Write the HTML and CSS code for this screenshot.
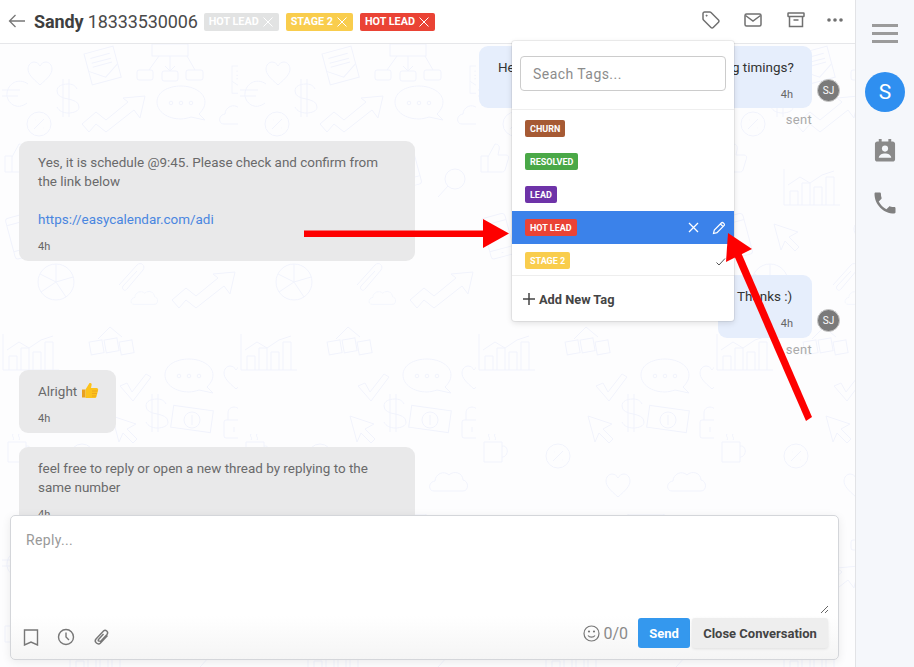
FILE: index.html
```html
<!DOCTYPE html>
<html lang="en">
<head>
<meta charset="utf-8">
<title>Conversation</title>
<link rel="stylesheet" href="styles.css">
</head>
<body>
<div class="app">
  <main class="main">
    <header class="topbar">
      <svg class="back" width="18" height="14" viewBox="0 0 18 14"><path d="M17 7H1.500M7.500 1L1.500 7l6 6" fill="none" stroke="#777" stroke-width="1.300"/></svg>
      <h1 class="title"><b>Sandy</b> 18333530006</h1>
      <div class="head-tags">
        <span class="tag tag-grey">HOT LEAD <svg class="tag-x" width="10" height="10" viewBox="0 0 10 10"><path d="M.5.5l9 9M9.500.5l-9 9"/></svg></span>
        <span class="tag tag-yellow">STAGE 2 <svg class="tag-x" width="10" height="10" viewBox="0 0 10 10"><path d="M.5.5l9 9M9.500.5l-9 9"/></svg></span>
        <span class="tag tag-red">HOT LEAD <svg class="tag-x" width="10" height="10" viewBox="0 0 10 10"><path d="M.5.5l9 9M9.500.5l-9 9"/></svg></span>
      </div>
      <div class="head-actions">
        <svg class="ha-tag" width="20" height="20" viewBox="0 0 20 20" fill="none" stroke="#707070" stroke-width="1.500"><path d="M2 3.600c0-.9.7-1.600 1.600-1.600h5.200c.5 0 .9.2 1.200.5l7.500 7.500c.6.600.6 1.600 0 2.200l-5.300 5.300c-.6.600-1.600.6-2.200 0L2.500 10c-.3-.3-.5-.7-.5-1.200z"/><circle cx="5.600" cy="5.600" r=".7" fill="#707070" stroke-width=".6"/></svg>
        <svg class="ha-mail" width="18" height="16" viewBox="0 0 18 16" fill="none" stroke="#707070" stroke-width="1.500"><rect x="1" y="2" width="16" height="12" rx="1.500"/><path d="M1.500 3.500L9 9l7.500-5.500"/></svg>
        <svg class="ha-box" width="18" height="16" viewBox="0 0 18 16" fill="none" stroke="#707070" stroke-width="1.500"><rect x="1" y="1" width="16" height="3.500" rx=".5"/><path d="M2.500 4.500v10h13v-10M6.500 8h5"/></svg>
        <svg class="ha-more" width="18" height="6" viewBox="0 0 18 6" fill="#707070"><circle cx="3" cy="3" r="1.800"/><circle cx="9" cy="3" r="1.800"/><circle cx="15" cy="3" r="1.800"/></svg>
      </div>
    </header>

    <section class="chat">
      <svg class="doodles" width="100%" height="100%" aria-hidden="true">
        <defs>
          <g id="d-heart"><path d="M12 23C4 16 0 12 0 7c0-4 3-7 6-7 3 0 5 2 6 4 1-2 3-4 6-4 3 0 6 3 6 7 0 5-4 9-12 16z"/></g>
          <g id="d-env"><rect x="0" y="0" width="30" height="32"/><path d="M0 18l15 10 15-10M5 6h20M5 11h20M5 15h20"/></g>
          <g id="d-flow"><rect x="15" y="0" width="36" height="12"/><path d="M33 12v14M28 22l5 5 5-5M22 12l-10 14M50 12l8 14"/><rect x="0" y="26" width="16" height="10" rx="2"/><rect x="25" y="27" width="16" height="10" rx="2"/><rect x="49" y="26" width="17" height="10" rx="2"/></g>
          <g id="d-dollar"><path d="M8 0v38M14 0v38M22 10c-2-4-5-5-9-5-6 0-11 2-11 7 0 11 22 5 22 16 0 4-5 6-11 6-5 0-9-2-11-6"/></g>
          <g id="d-euro"><path d="M26 4C16-3 6 4 5 13c-1 10 10 18 20 10M0 10h18M0 16h16"/></g>
          <g id="d-trend"><path d="M0 28l14-12 10 8L46 6l-5-4 22-2-5 22-6-8-28 22-10-8L7 36z"/></g>
          <g id="d-bubble"><path d="M24 0c13 0 24 7 24 16 0 5-3 9-6 12l6 6-14-3c-3 1-7 2-10 2C11 33 0 26 0 16S11 0 24 0z"/><circle cx="14" cy="17" r="1.800"/><circle cx="24" cy="17" r="1.800"/><circle cx="34" cy="17" r="1.800"/></g>
          <g id="d-cloud"><path d="M6 22C0 22 0 13 7 12c0-7 9-11 14-6 5-5 14-2 14 5 6 1 6 11 0 11z"/></g>
          <g id="d-pct"><circle cx="12" cy="12" r="12"/><path d="M7 17l10-10M8 8h.5M16 16h.5"/></g>
          <g id="d-pie"><circle cx="18" cy="18" r="18"/><path d="M18 18L18 0M18 18l17-5M18 18l10 15M18 18L3 28M18 18L2 10"/></g>
          <g id="d-clip"><path d="M4 26L22 6c4-4 9 1 6 5L12 30c-2 3-6 0-4-3L22 12"/></g>
          <g id="d-check"><path d="M0 12l7-3 5 9L26 0l5 3-18 24z"/></g>
          <g id="d-money"><rect x="0" y="4" width="40" height="22" transform="rotate(8 20 15)"/><circle cx="20" cy="16" r="8"/><path d="M20 11v10"/></g>
          <g id="d-lock"><rect x="0" y="14" width="20" height="18" rx="2"/><path d="M4 14V7c0-8 12-8 12 0v7M10 21v5"/></g>
          <g id="d-mug"><path d="M0 8h18v20H0zM18 12c7-1 7 11 0 11M5 0c-2 3 2 3 0 6M11 0c-2 3 2 3 0 6"/></g>
          <g id="d-cursor"><path d="M0 0l24 8-9 5 10 10-4 4-10-10-4 9z"/></g>
          <g id="d-thumb"><path d="M0 12h7v16H0zM7 13l7-13c4 0 5 3 4 6l-1 5h8c3 0 3 3 2 5l-3 10c-1 2-2 2-4 2H7"/></g>
          <g id="d-phone"><rect x="0" y="0" width="24" height="42" rx="3"/><path d="M0 7h24M0 34h24M11 38h2"/></g>
          <g id="d-bars"><path d="M0 0v36h56M6 36V22h8v14M18 36V14h8v22M30 36V18h8v18M42 36V8h8v28M4 16l12-8 10 6 12-8 12-4"/></g>
          <g id="d-search"><circle cx="17" cy="10" r="10"/><path d="M10 17L0 28"/></g>
          <g id="d-flow2"><rect x="0" y="2" width="13" height="13" transform="rotate(-10 6 8)"/><rect x="15" y="0" width="13" height="13" transform="rotate(-10 21 6)"/><rect x="30" y="2" width="13" height="13" transform="rotate(-10 36 8)"/><path d="M8 0L20 -12l12 10"/></g>
          <pattern id="doodle-tile" x="0" y="0" width="238" height="470" patternUnits="userSpaceOnUse">
            <g fill="none" stroke="#f1f3fc" stroke-width="1">
              <use href="#d-env" transform="translate(84 10) rotate(-15)"/>
              <use href="#d-flow" transform="translate(137 0)"/>
              <use href="#d-heart" transform="translate(28 18)"/>
              <use href="#d-dollar" transform="translate(55 35)"/>
              <use href="#d-euro" transform="translate(2 36)"/>
              <use href="#d-trend" transform="translate(82 52)"/>
              <use href="#d-bubble" transform="translate(157 42)"/>
              <use href="#d-env" transform="translate(232 22) scale(.85)"/>
              <use href="#d-cloud" transform="translate(218 58)"/>
              <use href="#d-pct" transform="translate(27 68)"/>
              <use href="#d-thumb" transform="translate(5 100)"/>
              <use href="#d-phone" transform="translate(150 105) rotate(-15)"/>
              <use href="#d-bars" transform="translate(70 125)"/>
              <use href="#d-phone" transform="translate(5 175) rotate(-15)"/>
              <use href="#d-search" transform="translate(200 125)"/>
              <use href="#d-cursor" transform="translate(60 180)"/>
              <use href="#d-heart" transform="translate(140 178)"/>
              <use href="#d-pie" transform="translate(38 220)"/>
              <use href="#d-clip" transform="translate(115 215)"/>
              <use href="#d-trend" transform="translate(172 228)"/>
              <use href="#d-cloud" transform="translate(130 245) scale(.7)"/>
              <use href="#d-flow2" transform="translate(90 295)"/>
              <use href="#d-bars" transform="translate(3 290)"/>
              <use href="#d-bubble" transform="translate(165 315)"/>
              <use href="#d-heart" transform="translate(224 322)"/>
              <use href="#d-check" transform="translate(120 330)"/>
              <use href="#d-dollar" transform="translate(144 350)"/>
              <use href="#d-money" transform="translate(172 360)"/>
              <use href="#d-lock" transform="translate(224 362)"/>
              <use href="#d-cursor" transform="translate(112 372)"/>
              <use href="#d-mug" transform="translate(8 390)"/>
              <use href="#d-pct" transform="translate(70 400)"/>
              <use href="#d-heart" transform="translate(130 430)"/>
              <use href="#d-cloud" transform="translate(190 425)"/>
            </g>
          </pattern>
        </defs>
        <rect width="100%" height="100%" fill="url(#doodle-tile)"/>
      </svg>

      <div class="thread">
        <div class="msg-out">
          <div class="msg-row">
            <div class="bubble out out-wide">
              <p class="text nowrap">Hey, can you please confirm our meeting timings?</p>
              <div class="time">4h</div>
            </div>
            <span class="sj">SJ</span>
          </div>
          <div class="sent">sent</div>
        </div>

        <div class="bubble in in-wide first-in">
          <p class="text">Yes, it is schedule @9:45. Please check and confirm from the link below</p>
          <p class="text link-line"><a class="link" href="#">https://easycalendar.com/adi</a></p>
          <div class="time">4h</div>
        </div>

        <div class="msg-out thanks">
          <div class="msg-row">
            <div class="bubble out">
              <p class="text nowrap">Thanks :)</p>
              <div class="time">4h</div>
            </div>
            <span class="sj">SJ</span>
          </div>
          <div class="sent">sent</div>
        </div>

        <div class="bubble in alright">
          <p class="text nowrap">Alright <svg class="thumb" width="18" height="17" viewBox="0 0 18 17"><path d="M1 7.500h3.500v8H1z" fill="#e8a020"/><path d="M4.500 7.500L8.500 1c2-.5 2.500 1.200 2 2.500L10 6h5.500c1.500 0 2 1.500 1.500 2.500l-1.500 6c-.3 1-1 1.500-2 1.500H4.500z" fill="#fcc21b"/><path d="M11 9h5.500M11 11.500h5M11 14h4" stroke="#e8a020" stroke-width=".8"/></svg></p>
          <div class="time">4h</div>
        </div>

        <div class="bubble in in-wide last-in">
          <p class="text">feel free to reply or open a new thread by replying to the same number</p>
          <div class="time">4h</div>
        </div>
      </div>
    </section>

    <div class="tag-menu">
      <div class="tag-search"><input class="tag-input" placeholder="Seach Tags..."></div>
      <ul class="tag-list">
        <li class="tag-row"><span class="chip chip-brown">CHURN</span></li>
        <li class="tag-row"><span class="chip chip-green">RESOLVED</span></li>
        <li class="tag-row"><span class="chip chip-purple">LEAD</span></li>
        <li class="tag-row active"><span class="chip chip-red">HOT LEAD</span>
          <span class="row-actions">
            <svg width="11" height="11" viewBox="0 0 11 11"><path d="M1 1l9 9M10 1l-9 9" stroke="#fff" stroke-width="1.300" fill="none"/></svg>
            <svg width="14" height="14" viewBox="0 0 14 14" fill="none" stroke="#fff" stroke-width="1.200"><path d="M1.500 12.500l.8-3.500 7-7c.6-.6 1.400-.6 2 0l.7.700c.6.600.6 1.400 0 2l-7 7zM8.500 3l2.500 2.500"/></svg>
          </span>
        </li>
        <li class="tag-row"><span class="chip chip-yellow">STAGE 2</span>
          <svg class="row-check" width="10" height="8" viewBox="0 0 10 8"><path d="M.5 4.500L3 7l6-6.500" stroke="#555" stroke-width="1" fill="none"/></svg>
        </li>
      </ul>
      <div class="add-tag"><svg width="14" height="14" viewBox="0 0 14 14"><path d="M7 1v12M1 7h12" stroke="#444" stroke-width="1.500"/></svg>Add New Tag</div>
    </div>

    <svg class="arrows" width="855" height="667" aria-hidden="true">
      <path d="M304 230.500h181v6.500h-181z" fill="#fe0000"/>
      <path d="M509 233.500L483 219v29z" fill="#fe0000"/>
      <path d="M806 421l6-4-72-167-7 3z" fill="#fe0000"/>
      <path d="M728 233l24 16-26 13z" fill="#fe0000"/>
    </svg>

    <form class="composer">
      <textarea class="reply" placeholder="Reply..."></textarea>
      <div class="composer-bar">
        <div class="composer-tools">
          <svg width="16" height="17" viewBox="0 0 16 17" fill="none" stroke="#777" stroke-width="1.400"><path d="M1.500 1h13v15L8 13l-6.500 3z"/></svg>
          <svg width="18" height="18" viewBox="0 0 18 18" fill="none" stroke="#777" stroke-width="1.400"><circle cx="9" cy="9" r="7.500"/><path d="M9 4.500V9l3 3"/></svg>
          <svg width="18" height="18" viewBox="0 0 18 18" fill="none" stroke="#777" stroke-width="1.400"><path d="M7 14L14 6.500c2-2.500-1.500-5.500-3.500-3.500L3 11c-2.500 3 2 6.500 4.500 4l7-7.500M10.500 6L5.500 11.500c-1 1.200.5 2.200 1.500 1.200"/></svg>
        </div>
        <div class="composer-send">
          <svg width="17" height="17" viewBox="0 0 17 17" fill="none" stroke="#777" stroke-width="1.200"><circle cx="8.500" cy="8.500" r="7.500"/><path d="M5 10.500c1.500 2.200 5.500 2.200 7 0"/><circle cx="6" cy="6.500" r=".5" fill="#777"/><circle cx="11" cy="6.500" r=".5" fill="#777"/></svg>
          <span class="count">0/0</span>
          <button class="btn-send" type="button">Send</button>
          <button class="btn-close" type="button">Close Conversation</button>
        </div>
      </div>
    </form>
  </main>

  <aside class="side">
    <div class="burger"><i></i><i></i><i></i></div>
    <div class="avatar">S</div>
    <svg class="side-contact" width="22" height="23" viewBox="0 0 22 24" fill="#8a8a8a"><path d="M4.500 0h3v2.500h7V0h3v2.500H19c1.400 0 2.500 1.100 2.500 2.500v16c0 1.400-1.100 2.500-2.500 2.500H3C1.600 23.500.500 22.400.500 21V5c0-1.400 1.100-2.500 2.500-2.500h1.500z"/><circle cx="11" cy="10" r="3.200" fill="#f5f7fb"/><path d="M4.500 19.500c0-3 3.500-4.500 6.500-4.500s6.500 1.500 6.500 4.500z" fill="#f5f7fb"/></svg>
    <svg class="side-phone" width="28" height="28" viewBox="0 0 24 24" fill="#808080"><path d="M6.620 10.790c1.440 2.830 3.760 5.140 6.590 6.590l2.200-2.200c.27-.27.670-.36 1.020-.24 1.120.37 2.330.57 3.570.57.550 0 1 .45 1 1V20c0 .55-.45 1-1 1-9.390 0-17-7.610-17-17 0-.55.450-1 1-1h3.500c.55 0 1 .45 1 1 0 1.250.2 2.450.57 3.570.11.350.03.740-.25 1.020l-2.200 2.200z"/></svg>
  </aside>
</div>
</body>
</html>
```

FILE: styles.css
```css
* { box-sizing: border-box; }
html, body { margin: 0; height: 100%; }
body { font-family: Roboto, "Liberation Sans", sans-serif; color: #444; background: #fff; overflow: hidden; }
.app { display: flex; width: 914px; height: 667px; }
.main { position: relative; width: 855px; height: 667px; display: flex; flex-direction: column; overflow: hidden; }

.topbar { height: 44px; flex: none; display: flex; align-items: center; padding-left: 8px; padding-right: 11px; background: #fff; border-bottom: 1px solid #e6e7ea; }
.back { flex: none; margin-top: -2px; }
.title { margin: 0 6px 0 8px; font-size: 18px; line-height: 22px; font-weight: 400; color: #4a4a4a; white-space: nowrap; letter-spacing: -.12px; }
.title b { font-weight: 700; color: #3f3f3f; }
.head-tags { display: flex; gap: 7px; }
.tag { height: 18px; display: flex; align-items: center; gap: 4px; padding: 0 6px 0 5px; border-radius: 2px; color: #fff; font-size: 10.800px; font-weight: 700; white-space: nowrap; }
.tag-x { stroke: #fff; stroke-width: 1; fill: none; flex: none; }
.tag-grey { background: #e2e3e3; }
.tag-yellow { background: #f9cd4d; }
.tag-red { background: #ea4335; }
.head-actions { margin-left: auto; display: flex; align-items: center; margin-top: -3px; }
.ha-mail { margin-left: 23px; }
.ha-box { margin-left: 25px; }
.ha-more { margin-left: 21px; }

.chat { position: relative; flex: 1; background: #fdfdfe; overflow: hidden; }
.doodles { position: absolute; inset: 0; }
.thread { position: relative; padding: 2px 15px 0 19px; display: flex; flex-direction: column; }
.bubble { border-radius: 9px; padding: 12px 19px 0; }
.in { background: #e9e9ea; color: #6a6a6a; }
.out { background: #e6eefc; color: #333; }
.in-wide { width: 396px; }
.out-wide { width: 333px; height: 62px; }
.text { margin: 0; font-size: 13.450px; line-height: 19px; }
.nowrap { white-space: nowrap; }
.link-line { margin-top: 19px; }
.link { color: #4a86e0; text-decoration: none; }
.time { margin-top: 11px; font-size: 11px; line-height: 14px; color: #666; }
.out .time { text-align: right; }
.msg-out { display: flex; flex-direction: column; align-items: flex-end; }
.msg-row { display: flex; align-items: flex-end; gap: 5px; }
.sj { width: 23px; height: 23px; margin-bottom: 6px; border-radius: 50%; background: #7a7a7a; color: #fff; font-size: 10px; display: flex; align-items: center; justify-content: center; flex: none; border: 1px solid #c8c8c8; }
.sent { margin: 4px 28px 0 0; font-size: 13px; line-height: 16px; color: #aaa; letter-spacing: .3px; }
.first-in { margin-top: 13px; height: 120px; }
.thanks { margin-top: 14px; }
.thanks .out { width: 94px; height: 63px; }
.alright { margin-top: 12px; width: 97px; height: 63px; }
.thumb { vertical-align: -3px; }
.last-in { margin-top: 14px; height: 90px; }

.tag-menu { position: absolute; left: 512px; top: 41px; width: 222px; height: 280px; background: #fff; border-radius: 3px; box-shadow: 0 0 0 1px rgba(0,0,0,.06), 0 2px 6px rgba(0,0,0,.12); display: flex; flex-direction: column; }
.tag-search { height: 69px; flex: none; padding: 15px 8px 0; border-bottom: 1px solid #eee; }
.tag-input { width: 206px; height: 35px; border: 1px solid #ccc; border-radius: 4px; padding: 0 12px; font: 14px Roboto, sans-serif; letter-spacing: .45px; outline: none; }
.tag-input::placeholder { color: #8c8c8c; opacity: 1; }
.tag-list { list-style: none; margin: 0; padding: 2px 0 0; border-bottom: 1px solid #eee; height: 166px; flex: none; }
.tag-row { height: 33px; padding: 0 13px; display: flex; align-items: center; justify-content: space-between; }
.tag-row.active { background: #3b82ea; }
.chip { height: 17px; display: flex; align-items: center; padding: 0 5px; border-radius: 2px; color: #fff; font-size: 9px; font-weight: 700; }
.chip-brown { background: #a65a34; }
.chip-green { background: #4aa847; }
.chip-purple { background: #6e33a8; }
.chip-red { background: #ea4335; }
.chip-yellow { background: #f9cd4d; }
.row-actions { display: flex; align-items: center; gap: 13px; margin-right: -5px; }
.row-check { margin-right: -5px; margin-top: 2px; }
.add-tag { flex: 1; display: flex; align-items: center; gap: 3px; padding: 1px 0 0 10px; font-size: 12.800px; font-weight: 700; color: #444; }

.arrows { position: absolute; left: 0; top: 0; pointer-events: none; }

.composer { position: absolute; left: 10px; top: 515px; width: 829px; height: 145px; background: linear-gradient(#fff 70%, #f5f5f5); border: 1px solid #d4d6da; border-radius: 5px; box-shadow: 0 2px 10px rgba(0,0,0,.08); display: flex; flex-direction: column; }
.reply { flex: 1; border: 0; background: transparent; resize: both; padding: 16px 15px 0; font: 14px Roboto, sans-serif; letter-spacing: .35px; outline: none; width: 818px; }
.reply::placeholder { color: #999; opacity: 1; }
.composer-bar { height: 45px; flex: none; display: flex; align-items: flex-start; justify-content: space-between; padding: 0 10px 0 12px; }
.composer-tools { display: flex; align-items: center; gap: 18px; margin-top: 14px; }
.composer-send { display: flex; align-items: center; margin-top: 4px; }
.count { font-size: 16px; color: #8a8a8a; margin: 0 10px 0 3px; }
.btn-send { height: 30px; width: 52px; border: 0; border-radius: 3px; background: #3498ee; color: #fff; font: 700 13px Roboto, sans-serif; padding: 0; }
.btn-close { height: 30px; width: 136px; margin-left: 2px; border: 0; border-radius: 3px; background: #eee; color: #444; font: 700 13px Roboto, sans-serif; padding: 0; box-shadow: 0 1px 3px rgba(0,0,0,.1); }

.side { width: 59px; flex: none; background: #f5f7fb; border-left: 1px solid #e2e3e6; display: flex; flex-direction: column; align-items: center; }
.burger { width: 26px; margin-top: 24px; display: flex; flex-direction: column; gap: 5px; }
.burger i { display: block; height: 3px; background: #9b9b9b; }
.avatar { width: 40px; height: 40px; margin-top: 29px; border-radius: 50%; background: #2f8ff0; color: #fff; font-size: 21px; display: flex; align-items: center; justify-content: center; }
.side-contact { margin-top: 27px; }
.side-phone { margin-top: 27px; }
```
